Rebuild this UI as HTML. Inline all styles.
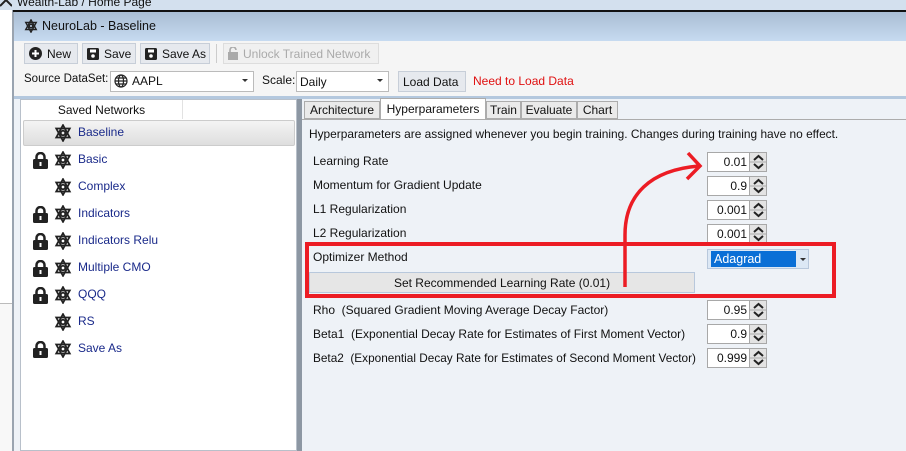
<!DOCTYPE html>
<html><head><meta charset="utf-8"><style>
*{box-sizing:border-box;margin:0;padding:0}
body{width:906px;height:451px;overflow:hidden;position:relative;background:#eef2f7;font-family:"Liberation Sans",sans-serif;font-size:12px;color:#111}
.a{position:absolute}
.btn{position:absolute;height:21px;border:1px solid #c7ced8;background:#e6e9ee;display:flex;align-items:center;padding-left:4px;gap:5px;font-size:12px}
.spin{position:absolute;left:707px;width:60px;height:20px;border:1px solid #a8a8a8;background:#fff}
.spin .v{position:absolute;right:19px;top:2px;font-size:12px}
.spin .b{position:absolute;right:0;top:0;width:17px;height:18px;background:#e3e3e3;border-left:1px solid #a8a8a8}
.lbl{position:absolute;left:313px;font-size:12px}
.row{position:absolute;left:22px;width:272px;height:26px}
.row .t{position:absolute;left:56px;top:5px;color:#1a2a8a;font-size:12px}
.tab{position:absolute;top:101px;height:18px;border:1px solid #acacac;background:#eaeaea;font-size:12px;padding-top:1px;text-align:center;white-space:nowrap}
</style></head><body>
<div class="a" style="left:0;top:0;width:906px;height:10px;background:#d3e0ee"></div>
<div class="a" style="left:17px;top:-5px;font-size:12px">Wealth-Lab / Home Page</div>
<svg class="a" style="left:0;top:0" width="12" height="8"><path d="M0 6 L6 0 L12 6" stroke="#222" stroke-width="2" fill="none"/></svg>
<div class="a" style="left:0;top:10px;width:13px;height:441px;background:#fff"></div>
<div class="a" style="left:12px;top:10px;width:2px;height:441px;background:#9aa4b0"></div>
<div class="a" style="left:0;top:303px;width:12px;height:148px;border-top:1px solid #bbb;background:#f8f8f8"></div>
<div class="a" style="left:13px;top:10px;width:893px;height:2px;background:#111"></div>
<div class="a" style="left:14px;top:12px;width:892px;height:29px;background:linear-gradient(#a9bdd4,#c6daf0)"></div>
<svg class="a" style="left:24px;top:19px" width="14" height="14" viewBox="0 0 16 16"><g fill="none" stroke="#222" stroke-width="1.6"><path d="M8 1 L14 12 L2 12 Z"/><path d="M8 15 L2 4 L14 4 Z"/><circle cx="8" cy="8" r="2"/></g></svg>
<div class="a" style="left:42px;top:19px;font-size:12.5px">NeuroLab - Baseline</div>
<div class="a" style="left:14px;top:41px;width:892px;height:55px;background:#f5f5f5"></div>
<div class="a" style="left:14px;top:96px;width:892px;height:3px;background:#b4c8de"></div>
<div class="btn" style="left:24px;top:43px;width:54px"><svg width="13" height="13"><circle cx="6.5" cy="6.5" r="6.5" fill="#222"/><path d="M6.5 3v7M3 6.5h7" stroke="#fff" stroke-width="2"/></svg>New</div>
<div class="btn" style="left:82px;top:43px;width:54px"><svg width="12" height="12"><rect width="12" height="12" rx="1.5" fill="#222"/><rect x="3" y="1.5" width="6" height="3" fill="#fff"/><circle cx="6" cy="8" r="1.8" fill="#fff"/></svg>Save</div>
<div class="btn" style="left:140px;top:43px;width:70px"><svg width="12" height="12"><rect width="12" height="12" rx="1.5" fill="#222"/><rect x="3" y="1.5" width="6" height="3" fill="#fff"/><circle cx="6" cy="8" r="1.8" fill="#fff"/></svg>Save As</div>
<div class="a" style="left:216px;top:44px;width:1px;height:19px;background:#ccc"></div>
<div class="btn" style="left:223px;top:43px;width:156px;color:#aaa;background:#f0f0f0;border-color:#ddd"><svg width="10" height="13"><rect x="0" y="5" width="10" height="8" fill="#aaa"/><path d="M2 5V3a3 3 0 0 1 6 0" stroke="#aaa" stroke-width="1.6" fill="none"/></svg>Unlock Trained Network</div>
<div class="a" style="left:24px;top:73px;font-size:11.5px">Source DataSet:</div>
<div class="a" style="left:110px;top:71px;width:144px;height:21px;border:1px solid #bbb;background:#fff"></div>
<svg class="a" style="left:114px;top:74px" width="14" height="14" viewBox="0 0 14 14"><g fill="none" stroke="#222" stroke-width="1.2"><circle cx="7" cy="7" r="6"/><ellipse cx="7" cy="7" rx="2.5" ry="6"/><path d="M1 7h12M2 4h10M2 10h10"/></g></svg>
<div class="a" style="left:132px;top:74px">AAPL</div>
<div class="a" style="left:242px;top:79px;border:3px solid transparent;border-top-color:#333"></div>
<div class="a" style="left:262px;top:73px">Scale:</div>
<div class="a" style="left:296px;top:71px;width:93px;height:21px;border:1px solid #bbb;background:#fff"></div>
<div class="a" style="left:300px;top:75px">Daily</div>
<div class="a" style="left:377px;top:79px;border:3px solid transparent;border-top-color:#333"></div>
<div class="btn" style="left:398px;top:71px;width:68px;height:21px">Load Data</div>
<div class="a" style="left:473px;top:74px;color:#e01010">Need to Load Data</div>
<div class="a" style="left:20px;top:99px;width:277px;height:352px;background:#fff;border:1px solid #b8c0ca"></div>
<div class="a" style="left:21px;top:100px;width:162px;height:19px;border-right:1px solid #e2e2e2;text-align:center;padding-top:3px">Saved Networks</div>
<div class="a" style="left:23px;top:120px;width:272px;height:26px;border:1px solid #ccc;border-radius:2px;background:linear-gradient(#f4f4f4,#dedede)"></div>
<div class="a" style="left:297px;top:99px;width:5px;height:352px;background:#8d97a3"></div>
<div id="rows"></div>
<div class="tab" style="left:304px;width:76px">Architecture</div>
<div class="tab" style="left:380px;top:98px;height:21px;width:106px;background:#fff;border-bottom:none;padding-top:3px">Hyperparameters</div>
<div class="tab" style="left:486px;width:35px">Train</div>
<div class="tab" style="left:521px;width:56px">Evaluate</div>
<div class="tab" style="left:577px;width:41px">Chart</div>
<div class="a" style="left:302px;top:119px;width:604px;height:1px;background:#acacac"></div>
<div class="a" style="left:309px;top:127px;font-size:11.9px">Hyperparameters are assigned whenever you begin training. Changes during training have no effect.</div>
<div class="lbl" style="top:154px">Learning Rate</div>
<div class="lbl" style="top:178px">Momentum for Gradient Update</div>
<div class="lbl" style="top:202px">L1 Regularization</div>
<div class="lbl" style="top:226px">L2 Regularization</div>
<div class="lbl" style="top:250px">Optimizer Method</div>
<div class="a" style="left:309px;top:272px;width:386px;height:21px;background:#e6e6e6;border:1px solid #b8c8dc;text-align:center;padding-top:3px">Set Recommended Learning Rate (0.01)</div>
<div class="lbl" style="top:303px">Rho&nbsp; (Squared Gradient Moving Average Decay Factor)</div>
<div class="lbl" style="top:327px">Beta1&nbsp; (Exponential Decay Rate for Estimates of First Moment Vector)</div>
<div class="lbl" style="top:351px;font-size:11.8px">Beta2&nbsp; (Exponential Decay Rate for Estimates of Second Moment Vector)</div>
<div id="spins"></div>
<div class="a" style="left:707px;top:249px;width:102px;height:20px;border:1px solid #b8c8dc;background:#dce8f5"></div>
<div class="a" style="left:711px;top:251px;width:85px;height:16px;background:#0a6fd6;color:#fff;padding:1px 3px;font-size:12.5px">Adagrad</div>
<div class="a" style="left:800px;top:258px;border:3px solid transparent;border-top-color:#333"></div>
<div class="a" style="left:305px;top:242px;width:531px;height:56px;border:4px solid #ec1c24"></div>
<svg class="a" style="left:0;top:0" width="906" height="451"><g fill="none" stroke="#ec1c24" stroke-width="3.5"><path d="M625 287 V235 C625 195 650 170 699 166"/><path d="M688 153 L700 166 L687 179"/></g></svg>
<script>
var names=[["Baseline",0],["Basic",1],["Complex",0],["Indicators",1],["Indicators Relu",1],["Multiple CMO",1],["QQQ",1],["RS",0],["Save As",1]];
var gear='<svg width="18" height="18" viewBox="0 0 16 16"><g fill="none" stroke="#222" stroke-width="1.6"><path d="M8 1 L14 12 L2 12 Z"/><path d="M8 15 L2 4 L14 4 Z"/><circle cx="8" cy="8" r="2"/></g></svg>';
var lock='<svg width="15" height="17"><rect x="0" y="7" width="15" height="10" rx="1.5" fill="#222"/><path d="M3.5 7.5V5a4 4 0 0 1 8 0v2.5" stroke="#222" stroke-width="2.5" fill="none"/><rect x="6.5" y="10" width="2" height="4" fill="#fff"/></svg>';
var h='';names.forEach(function(n,i){var y=120+27*i;h+='<div class="row" style="top:'+y+'px">'+(n[1]?'<div class="a" style="left:11px;top:5px">'+lock+'</div>':'')+'<div class="a" style="left:32px;top:4px">'+gear+'</div><div class="t">'+n[0]+'</div></div>';});
document.getElementById('rows').innerHTML=h;
var sp=[[152,"0.01"],[176,"0.9"],[200,"0.001"],[224,"0.001"],[300,"0.95"],[324,"0.9"],[348,"0.999"]];
var arr='<svg width="17" height="18"><path d="M4 7 L8.5 3 L13 7" stroke="#222" stroke-width="2" fill="none"/><path d="M4 11 L8.5 15 L13 11" stroke="#222" stroke-width="2" fill="none"/><path d="M0 9h17" stroke="#a8a8a8"/></svg>';
h='';sp.forEach(function(s){h+='<div class="spin" style="top:'+s[0]+'px"><span class="v">'+s[1]+'</span><div class="b">'+arr+'</div></div>';});
document.getElementById('spins').innerHTML=h;
</script>
</body></html>
